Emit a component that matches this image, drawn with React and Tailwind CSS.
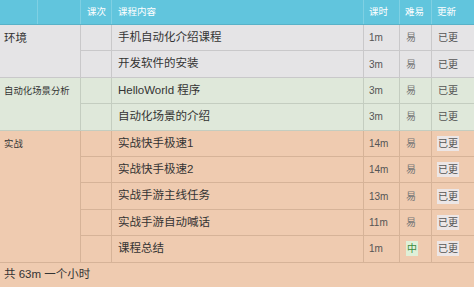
import React from 'react';

const groups = [
    {
        name: '环境',
        tone: 'gray',
        big: true,
        rows: [
            { title: '手机自动化介绍课程', time: '1m', level: '易' },
            { title: '开发软件的安装', time: '3m', level: '易' },
        ],
    },
    {
        name: '自动化场景分析',
        tone: 'green',
        rows: [
            { title: 'HelloWorld 程序', time: '3m', level: '易' },
            { title: '自动化场景的介绍', time: '3m', level: '易' },
        ],
    },
    {
        name: '实战',
        tone: 'orange',
        rows: [
            { title: '实战快手极速1', time: '14m', level: '易' },
            { title: '实战快手极速2', time: '14m', level: '易' },
            { title: '实战手游主线任务', time: '13m', level: '易' },
            { title: '实战手游自动喊话', time: '11m', level: '易' },
            { title: '课程总结', time: '1m', level: '中' },
        ],
    },
];

const tones = {
    gray: { bg: 'bg-[#e5e4e6]', line: 'border-[#c9c8ca]', tag: '' },
    green: { bg: 'bg-[#dfe8da]', line: 'border-[#c4cdc0]', tag: '' },
    orange: { bg: 'bg-[#efcbb0]', line: 'border-[#d6b398]', tag: 'bg-[#ece6e6]' },
};

const Row = ({ row, tone }) => {
    const t = tones[tone];
    return (
        <div className={`flex h-[26.4px] border-b ${t.line}`}>
            <div className={`w-[31px] border-r ${t.line}`}></div>
            <div className={`w-[252px] border-r ${t.line} flex items-center pl-[6px] text-[11.5px] text-[#333]`}>{row.title}</div>
            <div className={`w-[36px] border-r ${t.line} flex items-center pl-[5px] text-[10px] text-[#555]`}>{row.time}</div>
            <div className={`w-[32px] border-r ${t.line} flex items-center pl-[6px] text-[10px]`}>
                {row.level === '中'
                    ? <span className="bg-[#dff0d8] text-[#3c8a3c] px-[1px]">中</span>
                    : <span className="text-[#777]">{row.level}</span>}
            </div>
            <div className="flex-1 flex items-center pl-[5px] text-[10px] text-[#555]">
                <span className={`${t.tag} px-[1px]`}>已更</span>
            </div>
        </div>
    );
};

export default function App() {
    return (
        <div className="w-[474px] h-[287px] overflow-hidden bg-[#efcbb0] font-['Liberation_Sans','Noto_Sans_CJK_SC',sans-serif]">
            <div className="flex h-[25px] bg-[#61c5dd] border-b border-[#58b2c8] text-white text-[9.5px]">
                <div className="w-[38px] border-r border-[#7fd0e3]"></div>
                <div className="w-[43px] border-r border-[#7fd0e3]"></div>
                <div className="w-[31px] border-r border-[#7fd0e3] flex items-center pl-[6px]">课次</div>
                <div className="w-[252px] border-r border-[#7fd0e3] flex items-center pl-[6px]">课程内容</div>
                <div className="w-[36px] border-r border-[#7fd0e3] flex items-center pl-[5px]">课时</div>
                <div className="w-[32px] border-r border-[#7fd0e3] flex items-center pl-[5px]">难易</div>
                <div className="flex-1 flex items-center pl-[5px]">更新</div>
            </div>
            {groups.map((g) => {
                const t = tones[g.tone];
                return (
                    <div key={g.name} className={`flex ${t.bg}`}>
                        <div className={`w-[81px] border-r border-b ${t.line}`}>
                            <div className={`h-[26.4px] flex items-center pl-[4px] text-[#333] ${g.big ? 'text-[11.5px]' : 'text-[9.4px]'}`}>{g.name}</div>
                        </div>
                        <div className="flex-1">
                            {g.rows.map((r) => <Row key={r.title} row={r} tone={g.tone} />)}
                        </div>
                    </div>
                );
            })}
            <div className="h-[24px] flex items-center pl-[4px] text-[11.5px] text-[#333]">共 63m 一个小时</div>
        </div>
    );
}
